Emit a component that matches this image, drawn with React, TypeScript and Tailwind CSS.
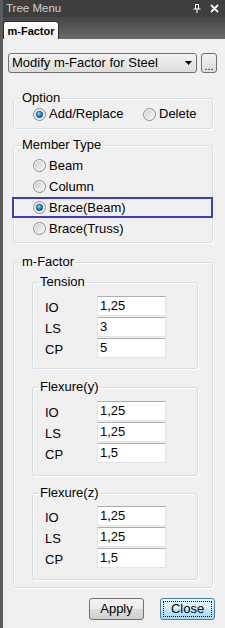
import React from "react";

interface Field {
  label: string;
  value: string;
}

interface Group {
  title: string;
  fields: Field[];
  pt: string;
  pb: string;
  mt: string;
}

const groups: Group[] = [
  {
    title: "Tension",
    fields: [
      { label: "IO", value: "1,25" },
      { label: "LS", value: "3" },
      { label: "CP", value: "5" },
    ],
    mt: "mt-[6px]",
    pt: "pt-[7px]",
    pb: "pb-[10px]",
  },
  {
    title: "Flexure(y)",
    fields: [
      { label: "IO", value: "1,25" },
      { label: "LS", value: "1,25" },
      { label: "CP", value: "1,5" },
    ],
    mt: "mt-[11px]",
    pt: "pt-[7px]",
    pb: "pb-[12px]",
  },
  {
    title: "Flexure(z)",
    fields: [
      { label: "IO", value: "1,25" },
      { label: "LS", value: "1,25" },
      { label: "CP", value: "1,5" },
    ],
    mt: "mt-[10px]",
    pt: "pt-[6px]",
    pb: "pb-[11px]",
  },
];

const Radio = ({ checked }: { checked?: boolean }) => (
  <svg width="13" height="13" viewBox="0 0 13 13" className="shrink-0">
    <defs>
      <linearGradient id="rfill" x1="0" y1="0" x2="1" y2="1">
        <stop offset="0" stopColor="#cfcfcf" />
        <stop offset="1" stopColor="#f7f7f7" />
      </linearGradient>
      <radialGradient id="rdot" cx="0.4" cy="0.35" r="0.7">
        <stop offset="0" stopColor="#9fe0ff" />
        <stop offset="0.5" stopColor="#1a8fd0" />
        <stop offset="1" stopColor="#0b4f86" />
      </radialGradient>
    </defs>
    <circle cx="6.5" cy="6.5" r="6" fill="#f4f4f4" stroke="#8a8a8a" strokeWidth="1" />
    <circle cx="6.5" cy="6.5" r="4.5" fill="url(#rfill)" />
    {checked && <circle cx="6.5" cy="6.5" r="3.2" fill="url(#rdot)" stroke="#0f3f6b" strokeWidth="0.6" />}
  </svg>
);

const legendCls = "px-[1px] leading-[14px] text-[13px] text-black";
const boxCls =
  "border border-[#d5dfe5] rounded-[3px] shadow-[inset_1px_1px_0_#ffffff,1px_1px_0_#ffffff]";

export default function App() {
  const font = { fontFamily: '"Liberation Sans", Arial, sans-serif' };
  return (
    <div className="w-[225px] h-[628px] overflow-hidden flex flex-col bg-[#f0f0f0] border-l-[3px] border-[#5b5b5b]" style={font}>
      {/* title bar */}
      <div className="h-[17px] bg-[#3e3e3e] flex items-center justify-between pl-[3px] pr-[6px]">
        <span className="text-[11.5px] leading-[17px] text-[#cfcfcf]">Tree Menu</span>
        <div className="flex items-center gap-[9px]">
          <svg width="8" height="9" viewBox="0 0 8 9">
            <path d="M2 0.5h4M2.5 0.5v4.5M5.5 0.5v4.5M0.5 5h7M4 5v4" stroke="#ffffff" strokeWidth="1" fill="none" />
          </svg>
          <svg width="9" height="9" viewBox="0 0 9 9">
            <path d="M1 1L8 8M8 1L1 8" stroke="#ffffff" strokeWidth="1.8" />
          </svg>
        </div>
      </div>

      {/* tab strip */}
      <div className="h-[22px] bg-gradient-to-b from-[#454545] to-[#6b6b6b] flex items-end">
        <div className="w-[56px] h-[18px] rounded-t-[3px] border border-b-0 border-[#2b2b2b] bg-gradient-to-b from-[#ffffff] to-[#f0f0f0] flex items-center justify-center">
          <span className="text-[11px] font-bold leading-[14px] text-black">m-Factor</span>
        </div>
      </div>

      {/* body */}
      <div className="flex flex-col">
        <div className="mt-[14px] ml-[5px] flex items-center gap-[4px]">
          <div className="w-[189px] h-[20px] rounded-[3px] border border-[#707070] bg-gradient-to-b from-[#f3f3f3] to-[#dcdcdc] flex items-center justify-between pl-[3px] pr-[4px]">
            <span className="text-[13px] leading-[16px] text-black">Modify m-Factor for Steel</span>
            <svg width="7" height="4" viewBox="0 0 7 4">
              <path d="M0 0h7L3.5 4z" fill="#000000" />
            </svg>
          </div>
          <div className="w-[16px] h-[20px] rounded-[3px] border border-[#707070] bg-gradient-to-b from-[#f3f3f3] to-[#dcdcdc] flex items-end justify-center">
            <span className="text-[11px] leading-[12px] text-black">...</span>
          </div>
        </div>

        {/* Option */}
        <fieldset className={`mt-[18px] ml-[10px] w-[200px] px-0 pt-[2px] pb-[7px] ${boxCls}`}>
          <legend className={`ml-[7px] ${legendCls}`}>Option</legend>
          <div className="h-[14px] flex items-center pl-[19px] text-[13px] text-black">
            <div className="w-[110px] flex items-center gap-[3px]">
              <Radio checked />
              <span>Add/Replace</span>
            </div>
            <div className="flex items-center gap-[3px]">
              <Radio />
              <span>Delete</span>
            </div>
          </div>
        </fieldset>

        {/* Member Type */}
        <fieldset className={`mt-[9px] ml-[10px] w-[200px] px-0 pt-[3px] pb-[3px] ${boxCls}`}>
          <legend className={`ml-[7px] ${legendCls}`}>Member Type</legend>
          {["Beam", "Column", "Brace(Beam)", "Brace(Truss)"].map((t) =>
            t === "Brace(Beam)" ? (
              <div
                key={t}
                className="h-[21px] -ml-[2px] -mr-[1px] border-2 border-[#3b3bc4] flex items-center gap-[3px] pl-[19px] text-[13px] text-black"
              >
                <Radio checked />
                <span>{t}</span>
              </div>
            ) : (
              <div key={t} className="h-[21px] flex items-center gap-[3px] pl-[19px] text-[13px] text-black">
                <Radio />
                <span>{t}</span>
              </div>
            )
          )}
        </fieldset>

        {/* m-Factor */}
        <fieldset className={`mt-[12px] ml-[10px] w-[200px] px-0 pt-0 pb-[7px] ${boxCls}`}>
          <legend className={`ml-[7px] ${legendCls}`}>m-Factor</legend>
          {groups.map((g) => (
            <fieldset key={g.title} className={`${g.mt} ml-[18px] w-[166px] px-0 ${g.pt} ${g.pb} ${boxCls}`}>
              <legend className={`ml-[6px] ${legendCls}`}>{g.title}</legend>
              <div className="flex flex-col gap-[1px]">
                {g.fields.map((f) => (
                  <div key={f.label} className="flex items-center pl-[12px]">
                    <span className="w-[52px] pt-[4px] text-[13px] leading-[16px] text-black">{f.label}</span>
                    <input
                      readOnly
                      defaultValue={f.value}
                      className="w-[69px] h-[20px] bg-white border border-[#e2e3ea] border-t-[#abadb3] px-[2px] pb-[2px] text-[13px] leading-[16px] text-black outline-none"
                      style={font}
                    />
                  </div>
                ))}
              </div>
            </fieldset>
          ))}
        </fieldset>

        {/* buttons */}
        <div className="mt-[10px] flex justify-end gap-[16px] pr-[10px]">
          <button className="w-[55px] h-[22px] rounded-[3px] border border-[#707070] bg-[linear-gradient(#f2f2f2_0%,#ebebeb_50%,#dddddd_51%,#cfcfcf_100%)] text-[13px] leading-[16px] text-black" style={font}>
            Apply
          </button>
          <button className="w-[55px] h-[22px] rounded-[3px] border border-[#3c7fb1] bg-[linear-gradient(#eaf6fd_0%,#d9f0fc_50%,#bee6fd_51%,#a7d9f5_100%)] p-[2px] text-[13px] leading-[16px] text-black" style={font}>
            <div className="w-full h-full border border-dotted border-black flex items-center justify-center">Close</div>
          </button>
        </div>
      </div>
    </div>
  );
}
